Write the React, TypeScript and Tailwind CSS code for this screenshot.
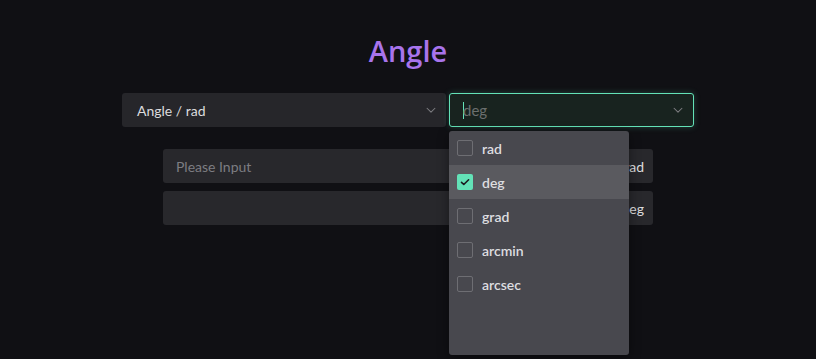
import { useState } from 'react'

const units = ['rad', 'deg', 'grad', 'arcmin', 'arcsec']

const Chevron = () => (
  <svg width="14" height="14" viewBox="0 0 16 16" fill="none" className="text-[#7c7c80]">
    <path d="M3.5 6l4.5 4.5L12.5 6" stroke="currentColor" strokeWidth="1.2" strokeLinecap="round" strokeLinejoin="round" />
  </svg>
)

const CheckBox = ({ checked }: { checked: boolean }) =>
  checked ? (
    <span className="flex h-[16px] w-[16px] items-center justify-center rounded-[2px] bg-[#63e2b7]">
      <svg width="12" height="12" viewBox="0 0 12 12" fill="none">
        <path d="M2.5 6.3l2.3 2.2L9.6 3.8" stroke="#1b1b1f" strokeWidth="1.6" strokeLinecap="round" strokeLinejoin="round" />
      </svg>
    </span>
  ) : (
    <span className="h-[16px] w-[16px] rounded-[2px] border border-[#6e6e73]" />
  )

export default function App() {
  const [selected] = useState('deg')

  return (
    <div
      className="flex h-[359px] w-[816px] flex-col items-center bg-[#101014] text-[14px]"
      style={{ fontFamily: 'Lato, "Open Sans", sans-serif' }}>
      <h1
        className="mt-[31px] text-[29px] font-semibold leading-[40px] text-[#a874ec]"
        style={{ fontFamily: '"Open Sans", sans-serif' }}>
        Angle
      </h1>
      <div className="mt-[22px] flex gap-[3px]">
        <div className="flex h-[34px] w-[324px] items-center justify-between rounded-[3px] bg-[#26262a] pl-[15px] pr-[8px] text-[#dcdcde]">
          <span>Angle / rad</span>
          <Chevron />
        </div>
        <div className="relative">
          <div className="flex h-[34px] w-[245px] items-center justify-between rounded-[3px] border border-[#63e2b7] bg-[#18231f] pl-[13px] pr-[8px] shadow-[0_0_6px_rgba(99,226,183,0.25)]">
            <span className="flex items-center text-[15px] text-[#6b6f6e]">
              <span className="mr-[-1px] h-[17px] w-[1px] bg-[#63e2b7]" />
              deg
            </span>
            <Chevron />
          </div>
          <div className="absolute left-0 top-[38px] z-10 h-[224px] w-[180px] rounded-[3px] bg-[#48484e] shadow-[0_3px_12px_rgba(0,0,0,0.4)]">
            {units.map((u) => (
              <div
                key={u}
                className={`flex h-[34px] items-center gap-[9px] pl-[8px] font-semibold text-[#dedee0] ${
                  u === selected ? 'bg-[#5a5a5f]' : ''
                }`}>
                <CheckBox checked={u === selected} />
                <span>{u}</span>
              </div>
            ))}
          </div>
        </div>
      </div>
      <div className="mt-[22px] flex w-[490px] flex-col gap-[8px]">
        <div className="flex h-[34px] items-center justify-between rounded-[3px] bg-[#28282c] px-[13px] pr-[9px]">
          <span className="text-[#7d7d82]">Please Input</span>
          <span className="text-[#dcdcde]">rad</span>
        </div>
        <div className="flex h-[34px] items-center justify-end rounded-[3px] bg-[#28282c] px-[13px] pr-[9px]">
          <span className="text-[#dcdcde]">deg</span>
        </div>
      </div>
    </div>
  )
}
